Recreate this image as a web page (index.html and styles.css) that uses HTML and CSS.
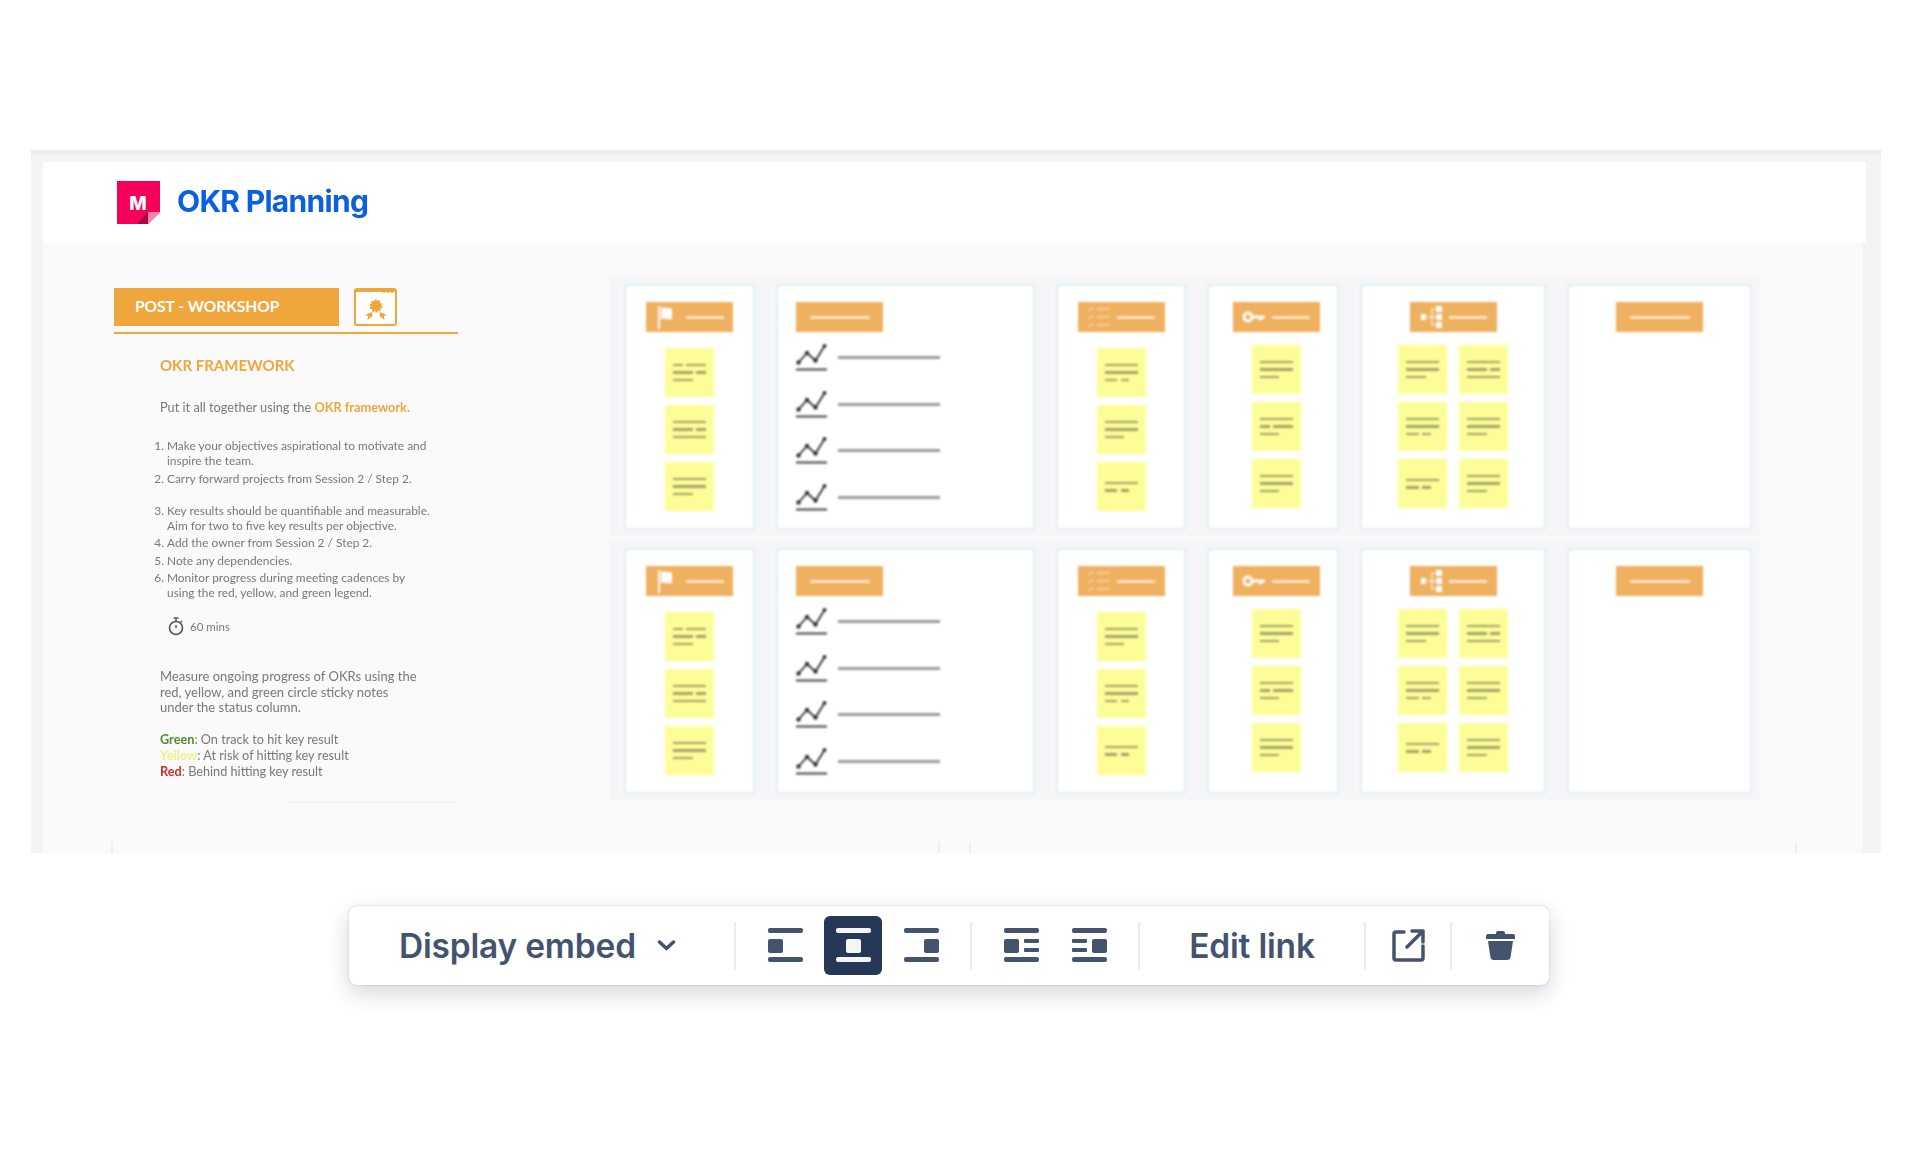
FILE: index.html
```html
<!DOCTYPE html>
<html lang="en">
<head>
    <meta charset="UTF-8">
    <title>OKR Planning embed</title>
    <link rel="stylesheet" href="styles.css">
</head>
<body>
    <div class="frame">
        <div class="sheet">
            <header class="sheet-head">
                <svg class="logo" width="43" height="43" viewBox="0 0 43 43">
                    <path d="M0 0h43v31L31 43H0z" fill="#f5005b"/>
                    <path d="M31 31h12L31 43z" fill="#ff7fae"/>
                    <path d="M20 43l11-12v12z" fill="#a30a44"/>
                    <text x="21" y="28.500" text-anchor="middle" class="logo-m">M</text>
                </svg>
                <h1>OKR Planning</h1>
            </header>

            <div class="sheet-body">
                <section class="brief">
                    <div class="brief-head">
                        <div class="stage-label">POST - WORKSHOP</div>
                        <svg width="43" height="38" viewBox="0 0 43 38">
                            <rect x="1" y="1" width="41" height="36" rx="2" fill="#fff" stroke="#efa63d" stroke-width="2"/>
                            <rect x="1" y="1" width="41" height="3" fill="#efa63d"/>
                            <circle cx="30" cy="4" r="1" fill="#efa63d"/><circle cx="34" cy="4" r="1" fill="#efa63d"/><circle cx="38" cy="4" r="1" fill="#efa63d"/>
                            <circle cx="22" cy="18" r="5" fill="#efa63d" stroke="#efa63d" stroke-width="3" stroke-dasharray="2 1.100"/>
                            <path d="M18 24l-7 3 3 1 -.5 4 5-4zM26 24l7 3-3 1 .5 4-5-4z" fill="#efa63d"/>
                        </svg>
                    </div>
                    <div class="brief-text">
                        <h2>OKR FRAMEWORK</h2>
                        <p class="intro">Put it all together using the <strong>OKR framework.</strong></p>
                        <ol class="steps">
                            <li>Make your objectives aspirational to motivate and<br>inspire the team.</li>
                            <li>Carry forward projects from Session 2 / Step 2.</li>
                            <li>Key results should be quantifiable and measurable.<br>Aim for two to five key results per objective.</li>
                            <li>Add the owner from Session 2 / Step 2.</li>
                            <li>Note any dependencies.</li>
                            <li>Monitor progress during meeting cadences by<br>using the red, yellow, and green legend.</li>
                        </ol>
                        <div class="timer">
                            <svg width="17" height="19" viewBox="0 0 17 19" fill="none" stroke="#55565a">
                                <circle cx="8" cy="11" r="6.500" stroke-width="1.600"/>
                                <path d="M5.500 1h5M8 1v3M14 4l-1.500 1.500M8 8v3" stroke-width="1.500"/>
                            </svg>
                            60 mins
                        </div>
                        <p class="measure">Measure ongoing progress of OKRs using the<br>red, yellow, and green circle sticky notes<br>under the status column.</p>
                        <p class="legend">
                            <b class="green">Green</b>: On track to hit key result<br>
                            <b class="yellow">Yellow</b>: At risk of hitting key result<br>
                            <b class="red">Red</b>: Behind hitting key result
                        </p>
                    </div>
                    <div class="brief-end"></div>
                </section>

                <section class="board">
                    <div class="board-row">
                        <div class="card">
                            <div class="chip"><svg class="chip-icon" width="24" height="24" viewBox="0 0 24 24"><path d="M2 1h2v23H2zM5 3c4-1.500 6 1 11 0v11c-5 1-7-1-11 0z" fill="#fff"/></svg><i class="chip-line"></i></div>
                            <div class="notes">
                                <div class="sticky"><i class="dash-a"></i><i class="dash-b"></i><i class="short"></i></div>
                                <div class="sticky"><i></i><i class="dash-b"></i><i></i></div>
                                <div class="sticky"><i></i><i></i><i class="short"></i></div>
                            </div>
                        </div>
                        <div class="card card-trends">
                            <div class="chip"><i class="chip-line wide"></i></div>
                            <div class="trend"><svg width="31" height="27" viewBox="0 0 31 27"><path d="M2.500 18.500L11 9l8.500 7.500L28.500 2" fill="none" stroke="#333" stroke-width="1.800"/><circle cx="2.500" cy="18.500" r="2.200" fill="#333"/><circle cx="11" cy="9" r="2.200" fill="#333"/><circle cx="19.500" cy="16.500" r="2.200" fill="#333"/><circle cx="28.500" cy="2" r="2" fill="#333"/><path d="M0 25.500h31" stroke="#444" stroke-width="2"/></svg><i class="trend-line"></i></div>
                            <div class="trend"><svg width="31" height="27" viewBox="0 0 31 27"><path d="M2.500 18.500L11 9l8.500 7.500L28.500 2" fill="none" stroke="#333" stroke-width="1.800"/><circle cx="2.500" cy="18.500" r="2.200" fill="#333"/><circle cx="11" cy="9" r="2.200" fill="#333"/><circle cx="19.500" cy="16.500" r="2.200" fill="#333"/><circle cx="28.500" cy="2" r="2" fill="#333"/><path d="M0 25.500h31" stroke="#444" stroke-width="2"/></svg><i class="trend-line"></i></div>
                            <div class="trend"><svg width="31" height="27" viewBox="0 0 31 27"><path d="M2.500 18.500L11 9l8.500 7.500L28.500 2" fill="none" stroke="#333" stroke-width="1.800"/><circle cx="2.500" cy="18.500" r="2.200" fill="#333"/><circle cx="11" cy="9" r="2.200" fill="#333"/><circle cx="19.500" cy="16.500" r="2.200" fill="#333"/><circle cx="28.500" cy="2" r="2" fill="#333"/><path d="M0 25.500h31" stroke="#444" stroke-width="2"/></svg><i class="trend-line"></i></div>
                            <div class="trend"><svg width="31" height="27" viewBox="0 0 31 27"><path d="M2.500 18.500L11 9l8.500 7.500L28.500 2" fill="none" stroke="#333" stroke-width="1.800"/><circle cx="2.500" cy="18.500" r="2.200" fill="#333"/><circle cx="11" cy="9" r="2.200" fill="#333"/><circle cx="19.500" cy="16.500" r="2.200" fill="#333"/><circle cx="28.500" cy="2" r="2" fill="#333"/><path d="M0 25.500h31" stroke="#444" stroke-width="2"/></svg><i class="trend-line"></i></div>
                        </div>
                        <div class="card">
                            <div class="chip"><svg class="chip-icon" width="24" height="24" viewBox="0 0 24 24" fill="none" stroke="#fff" stroke-opacity=".7"><path d="M1 4l2 2 3-4M1 12l2 2 3-4M1 20l2 2 3-4M10 4h13M10 12h13M10 20h13"/></svg><i class="chip-line"></i></div>
                            <div class="notes">
                                <div class="sticky"><i></i><i></i><i class="dash-c"></i></div>
                                <div class="sticky"><i></i><i></i><i class="short"></i></div>
                                <div class="sticky"><i></i><i class="dash-c"></i></div>
                            </div>
                        </div>
                        <div class="card card-shifted">
                            <div class="chip"><svg class="chip-icon" width="24" height="24" viewBox="0 0 24 24"><circle cx="6" cy="12" r="4" fill="none" stroke="#fff" stroke-width="3"/><path d="M10 10.500h13v3h-3v2h-3v-2h-7z" fill="#fff"/></svg><i class="chip-line"></i></div>
                            <div class="notes notes-high">
                                <div class="sticky"><i></i><i></i><i class="short"></i></div>
                                <div class="sticky"><i></i><i class="dash-a"></i><i class="short"></i></div>
                                <div class="sticky"><i></i><i></i><i class="short"></i></div>
                            </div>
                        </div>
                        <div class="card">
                            <div class="chip"><svg class="chip-icon" width="24" height="24" viewBox="0 0 24 24"><path d="M2 9h5v6H2zM17 1h6v6h-6zM17 9h6v6h-6zM17 17h6v6h-6z" fill="#fff"/><path d="M16 4h-3v16h3M8 12h8" fill="none" stroke="#fff"/></svg><i class="chip-line"></i></div>
                            <div class="notes notes-high notes-double">
                                <div class="sticky"><i></i><i></i><i class="short"></i></div>
                                <div class="sticky"><i></i><i class="dash-b"></i><i></i></div>
                                <div class="sticky"><i></i><i></i><i class="dash-c"></i></div>
                                <div class="sticky"><i></i><i></i><i class="short"></i></div>
                                <div class="sticky"><i></i><i class="dash-c"></i></div>
                                <div class="sticky"><i></i><i></i><i class="short"></i></div>
                            </div>
                        </div>
                        <div class="card">
                            <div class="chip"><i class="chip-line wide"></i></div>
                        </div>
                    </div>

                    <div class="board-row">
                        <div class="card">
                            <div class="chip"><svg class="chip-icon" width="24" height="24" viewBox="0 0 24 24"><path d="M2 1h2v23H2zM5 3c4-1.500 6 1 11 0v11c-5 1-7-1-11 0z" fill="#fff"/></svg><i class="chip-line"></i></div>
                            <div class="notes">
                                <div class="sticky"><i class="dash-a"></i><i class="dash-b"></i><i class="short"></i></div>
                                <div class="sticky"><i></i><i class="dash-b"></i><i></i></div>
                                <div class="sticky"><i></i><i></i><i class="short"></i></div>
                            </div>
                        </div>
                        <div class="card card-trends">
                            <div class="chip"><i class="chip-line wide"></i></div>
                            <div class="trend"><svg width="31" height="27" viewBox="0 0 31 27"><path d="M2.500 18.500L11 9l8.500 7.500L28.500 2" fill="none" stroke="#333" stroke-width="1.800"/><circle cx="2.500" cy="18.500" r="2.200" fill="#333"/><circle cx="11" cy="9" r="2.200" fill="#333"/><circle cx="19.500" cy="16.500" r="2.200" fill="#333"/><circle cx="28.500" cy="2" r="2" fill="#333"/><path d="M0 25.500h31" stroke="#444" stroke-width="2"/></svg><i class="trend-line"></i></div>
                            <div class="trend"><svg width="31" height="27" viewBox="0 0 31 27"><path d="M2.500 18.500L11 9l8.500 7.500L28.500 2" fill="none" stroke="#333" stroke-width="1.800"/><circle cx="2.500" cy="18.500" r="2.200" fill="#333"/><circle cx="11" cy="9" r="2.200" fill="#333"/><circle cx="19.500" cy="16.500" r="2.200" fill="#333"/><circle cx="28.500" cy="2" r="2" fill="#333"/><path d="M0 25.500h31" stroke="#444" stroke-width="2"/></svg><i class="trend-line"></i></div>
                            <div class="trend"><svg width="31" height="27" viewBox="0 0 31 27"><path d="M2.500 18.500L11 9l8.500 7.500L28.500 2" fill="none" stroke="#333" stroke-width="1.800"/><circle cx="2.500" cy="18.500" r="2.200" fill="#333"/><circle cx="11" cy="9" r="2.200" fill="#333"/><circle cx="19.500" cy="16.500" r="2.200" fill="#333"/><circle cx="28.500" cy="2" r="2" fill="#333"/><path d="M0 25.500h31" stroke="#444" stroke-width="2"/></svg><i class="trend-line"></i></div>
                            <div class="trend"><svg width="31" height="27" viewBox="0 0 31 27"><path d="M2.500 18.500L11 9l8.500 7.500L28.500 2" fill="none" stroke="#333" stroke-width="1.800"/><circle cx="2.500" cy="18.500" r="2.200" fill="#333"/><circle cx="11" cy="9" r="2.200" fill="#333"/><circle cx="19.500" cy="16.500" r="2.200" fill="#333"/><circle cx="28.500" cy="2" r="2" fill="#333"/><path d="M0 25.500h31" stroke="#444" stroke-width="2"/></svg><i class="trend-line"></i></div>
                        </div>
                        <div class="card">
                            <div class="chip"><svg class="chip-icon" width="24" height="24" viewBox="0 0 24 24" fill="none" stroke="#fff" stroke-opacity=".7"><path d="M1 4l2 2 3-4M1 12l2 2 3-4M1 20l2 2 3-4M10 4h13M10 12h13M10 20h13"/></svg><i class="chip-line"></i></div>
                            <div class="notes">
                                <div class="sticky"><i></i><i></i><i class="short"></i></div>
                                <div class="sticky"><i></i><i></i><i class="dash-c"></i></div>
                                <div class="sticky"><i></i><i class="dash-c"></i></div>
                            </div>
                        </div>
                        <div class="card card-shifted">
                            <div class="chip"><svg class="chip-icon" width="24" height="24" viewBox="0 0 24 24"><circle cx="6" cy="12" r="4" fill="none" stroke="#fff" stroke-width="3"/><path d="M10 10.500h13v3h-3v2h-3v-2h-7z" fill="#fff"/></svg><i class="chip-line"></i></div>
                            <div class="notes notes-high">
                                <div class="sticky"><i></i><i></i><i class="short"></i></div>
                                <div class="sticky"><i></i><i class="dash-a"></i><i class="short"></i></div>
                                <div class="sticky"><i></i><i></i><i class="short"></i></div>
                            </div>
                        </div>
                        <div class="card">
                            <div class="chip"><svg class="chip-icon" width="24" height="24" viewBox="0 0 24 24"><path d="M2 9h5v6H2zM17 1h6v6h-6zM17 9h6v6h-6zM17 17h6v6h-6z" fill="#fff"/><path d="M16 4h-3v16h3M8 12h8" fill="none" stroke="#fff"/></svg><i class="chip-line"></i></div>
                            <div class="notes notes-high notes-double">
                                <div class="sticky"><i></i><i></i><i class="short"></i></div>
                                <div class="sticky"><i></i><i class="dash-b"></i><i></i></div>
                                <div class="sticky"><i></i><i></i><i class="dash-c"></i></div>
                                <div class="sticky"><i></i><i></i><i class="short"></i></div>
                                <div class="sticky"><i></i><i class="dash-c"></i></div>
                                <div class="sticky"><i></i><i></i><i class="short"></i></div>
                            </div>
                        </div>
                        <div class="card">
                            <div class="chip"><i class="chip-line wide"></i></div>
                        </div>
                    </div>
                </section>
            </div>

            <div class="next-row">
                <div class="next-slide slide-a"></div>
                <div class="next-slide slide-b"></div>
            </div>
        </div>
    </div>

    <div class="toolbar">
        <button class="select">
            Display embed
            <svg width="19" height="11" viewBox="0 0 19 11" fill="none" stroke="#44546f" stroke-width="3.500" stroke-linecap="round" stroke-linejoin="round"><path d="M2.500 2l7 6.500 7-6.500"/></svg>
        </button>
        <div class="sep"></div>
        <div class="tool-group">
            <button class="tool">
                <svg width="35" height="35" viewBox="0 0 35 35" fill="#44546f"><rect y="0" width="35" height="5" rx="2"/><rect y="11" width="15" height="14" rx="2"/><rect y="29" width="35" height="5" rx="2"/></svg>
            </button>
            <button class="tool tool-active">
                <svg width="35" height="35" viewBox="0 0 35 35" fill="#f4f5f7"><rect y="0" width="35" height="5" rx="2"/><rect x="10" y="11" width="15" height="14" rx="2"/><rect y="29" width="35" height="5" rx="2"/></svg>
            </button>
            <button class="tool">
                <svg width="35" height="35" viewBox="0 0 35 35" fill="#44546f"><rect y="0" width="35" height="5" rx="2"/><rect x="20" y="11" width="15" height="14" rx="2"/><rect y="29" width="35" height="5" rx="2"/></svg>
            </button>
        </div>
        <div class="sep"></div>
        <div class="tool-group">
            <button class="tool">
                <svg width="35" height="35" viewBox="0 0 35 35" fill="#44546f"><rect y="0" width="35" height="5" rx="2"/><rect y="11" width="15" height="14" rx="2"/><rect x="20" y="11" width="15" height="4" rx="1"/><rect x="20" y="20" width="15" height="4" rx="1"/><rect y="29" width="35" height="5" rx="2"/></svg>
            </button>
            <button class="tool">
                <svg width="35" height="35" viewBox="0 0 35 35" fill="#44546f"><rect y="0" width="35" height="5" rx="2"/><rect x="20" y="11" width="15" height="14" rx="2"/><rect y="11" width="15" height="4" rx="1"/><rect y="20" width="15" height="4" rx="1"/><rect y="29" width="35" height="5" rx="2"/></svg>
            </button>
        </div>
        <div class="sep"></div>
        <button class="edit-link">Edit link</button>
        <div class="sep"></div>
        <button class="tool tool-open">
            <svg width="33" height="33" viewBox="0 0 33 33" fill="none" stroke="#44546f" stroke-width="3.500" stroke-linecap="round" stroke-linejoin="round"><path d="M12 3H4a2 2 0 0 0-2 2v24a2 2 0 0 0 2 2h25a2 2 0 0 0 2-2V17"/><path d="M15 18L31 2M20 2h11v11"/></svg>
        </button>
        <div class="sep"></div>
        <button class="tool tool-trash">
            <svg width="29" height="29" viewBox="0 0 29 29" fill="#44546f"><path d="M10 2a2 2 0 0 1 2-2h5a2 2 0 0 1 2 2v1h8a2 2 0 0 1 2 2v3H0V5a2 2 0 0 1 2-2h8z"/><path d="M2 10h25l-2.500 16.500A3 3 0 0 1 21.500 29h-14a3 3 0 0 1-3-2.500z"/></svg>
        </button>
    </div>
</body>
</html>
```

FILE: styles.css
```css
* {
    margin: 0;
    padding: 0;
    box-sizing: border-box;
}

body {
    font-family: 'Lato', 'Liberation Sans', sans-serif;
    background: white;
    min-height: 100vh;
    padding-top: 150px;
}

.frame {
    width: 1850px;
    height: 703px;
    margin-left: 31px;
    padding: 7px 15px 0 12px;
    background: #f3f4f6;
    border-top: 5px solid #ebecf0;
}

.sheet {
    display: flex;
    flex-direction: column;
    height: 691px;
    background: #fafafa;
    border-right: 3px solid #f1f2f4;
}

.sheet-head {
    display: flex;
    align-items: center;
    gap: 17px;
    flex-shrink: 0;
    height: 81px;
    margin-right: -3px;
    padding-left: 74px;
    background: white;
}

.logo-m {
    font-family: 'Inter', sans-serif;
    font-size: 18.5px;
    font-weight: 800;
    fill: white;
}

.sheet-head h1 {
    margin-top: -4px;
    font-family: 'Inter', sans-serif;
    font-size: 30px;
    font-weight: 700;
    letter-spacing: -0.7px;
    color: #0b60e2;
    filter: blur(0.3px);
}

.sheet-body {
    display: flex;
    flex-shrink: 0;
    padding-top: 34px;
}

/* left column */
.brief {
    width: 567px;
    padding: 11px 0 0 71px;
    font-size: 13px;
    color: #77787b;
    filter: blur(0.35px);
}

.brief-head {
    display: flex;
    gap: 15px;
    width: 344px;
    padding-bottom: 6px;
    border-bottom: 2px solid #efa63d;
}

.stage-label {
    width: 225px;
    height: 38px;
    padding-left: 21px;
    background: #efa63d;
    color: white;
    font-size: 15.5px;
    font-weight: 700;
    line-height: 36px;
}

.brief-text {
    padding-left: 46px;
    line-height: 15px;
}

.brief-text h2 {
    margin-top: 22px;
    font-size: 15px;
    font-weight: 700;
    line-height: 18px;
    color: #efa63d;
}

.intro {
    margin-top: 25px;
    font-size: 12.75px;
    line-height: 16px;
}

.intro strong {
    color: #efa63d;
}

.steps {
    margin-top: 23px;
    padding-left: 7px;
    font-size: 11.9px;
}

.steps li {
    margin-top: 2.5px;
}

.steps li:first-child {
    margin-top: 0;
}

.steps li:nth-child(3) {
    margin-top: 17px;
}

.timer {
    display: flex;
    align-items: center;
    gap: 5px;
    height: 20px;
    margin-top: 16px;
    padding-left: 8px;
    font-size: 11.5px;
}

.measure,
.legend {
    line-height: 15.7px;
}

.measure {
    margin-top: 33px;
}

.legend {
    margin-top: 16px;
    font-size: 12.7px;
}

.green {
    color: #4b8f2f;
}

.yellow {
    color: #f4ee8b;
}

.red {
    color: #cf2f2a;
}

.brief-end {
    width: 175px;
    height: 2px;
    margin: 22px 0 0 170px;
    background: #f5f5f6;
}

/* board of blurred cards */
.board {
    width: 1150px;
    height: 528px;
    background: #f6f6f8;
    border-bottom: 4px solid #fcfcfd;
    filter: blur(0.9px);
}

.board-row {
    display: grid;
    grid-template-columns: 131px 259px 130px 132px 186px 185px;
    gap: 21px;
    height: 260px;
    padding: 7px 0 0 14px;
}

.board-row + .board-row {
    height: 264px;
    padding-top: 8px;
    border-top: 3px solid #fcfcfd;
}

.card {
    display: flex;
    flex-direction: column;
    align-items: center;
    height: 246px;
    padding-top: 16px;
    background: white;
    border: 2px solid #e1eff6;
}

.card-shifted {
    padding-left: 6px;
}

.chip {
    display: flex;
    align-items: center;
    justify-content: center;
    gap: 6px;
    flex-shrink: 0;
    width: 87px;
    height: 30px;
    background: #efb05f;
}

.chip-line {
    width: 38px;
    height: 3px;
    background: #fbe3c4;
}

.chip-line.wide {
    width: 60px;
}

.notes {
    display: grid;
    grid-template-columns: 49px;
    gap: 8px;
    margin-top: 16px;
}

.notes-high {
    margin-top: 13px;
}

.notes-double {
    grid-template-columns: 49px 49px;
    column-gap: 12px;
}

.sticky {
    display: flex;
    flex-direction: column;
    justify-content: center;
    gap: 5px;
    height: 49px;
    padding: 0 8px;
    background: #fdfd98;
}

.sticky i {
    display: block;
    height: 2.5px;
    background: #a3a368;
}

.sticky i.short {
    width: 60%;
}

.sticky i.dash-a {
    background: linear-gradient(to right, #a3a368 30%, transparent 30% 40%, #a3a368 40%);
}

.sticky i.dash-b {
    background: linear-gradient(to right, #a3a368 60%, transparent 60% 70%, #a3a368 70%);
}

.sticky i.dash-c {
    width: 75%;
    background: linear-gradient(to right, #a3a368 50%, transparent 50% 65%, #a3a368 65%);
}

.card-trends {
    align-items: flex-start;
    padding-left: 18px;
}

.card-trends .chip {
    margin-bottom: 12px;
}

.trend {
    display: flex;
    align-items: flex-start;
    gap: 11px;
    height: 46.7px;
    flex-shrink: 0;
}

.trend-line {
    width: 102px;
    height: 3px;
    margin-top: 12px;
    background: #9c9c9c;
}

/* faint tops of the next slides */
.next-row {
    display: flex;
    flex: 1;
    align-items: flex-end;
    padding-left: 68px;
    gap: 29px;
}

.next-slide {
    height: 11px;
    border-left: 2px solid #eeeff1;
    border-right: 2px solid #eeeff1;
}

.slide-a {
    width: 829px;
}

.slide-b {
    width: 828px;
}

/* toolbar */
.toolbar {
    display: flex;
    align-items: center;
    width: 1200px;
    height: 79px;
    margin: 53px 0 0 349px;
    background: white;
    border-radius: 8px;
    box-shadow: 0 8px 22px rgba(9, 30, 66, 0.18), 0 0 2px rgba(9, 30, 66, 0.22);
    font-family: 'Inter', sans-serif;
    font-size: 33.5px;
    font-weight: 600;
    letter-spacing: -0.2px;
    color: #44546f;
}

.toolbar button {
    display: flex;
    align-items: center;
    justify-content: center;
    flex-shrink: 0;
    border: none;
    background: none;
    font: inherit;
    letter-spacing: inherit;
    color: inherit;
    white-space: nowrap;
}

.toolbar .select {
    gap: 21px;
    width: 385px;
    padding-left: 50px;
    justify-content: flex-start;
}

.sep {
    flex-shrink: 0;
    width: 2px;
    height: 48px;
    background: #ebecf0;
}

.tool-group {
    display: flex;
    flex-shrink: 0;
    gap: 10px;
    padding: 0 20px;
}

.tool {
    width: 58px;
    height: 59px;
    border-radius: 6px;
}

.toolbar .tool-active {
    background: #253858;
}

.toolbar .edit-link {
    width: 224px;
}

.tool-open {
    width: 84px;
}

.tool-trash {
    width: 97px;
}
```
